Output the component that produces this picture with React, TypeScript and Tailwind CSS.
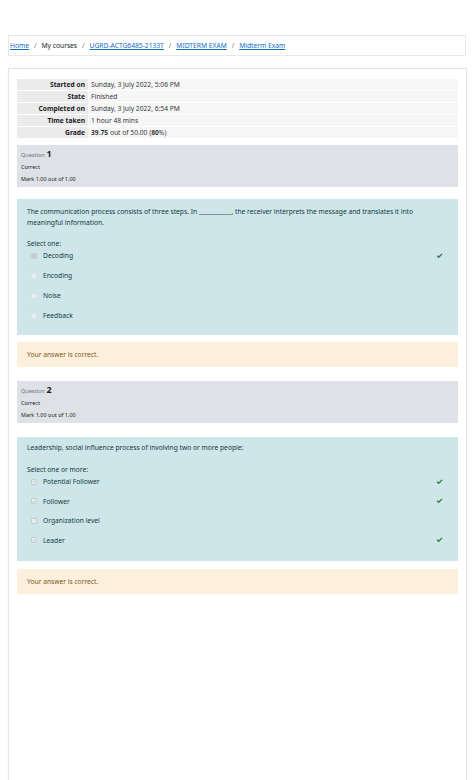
const Check = () => (
  <svg viewBox="0 0 12 10" className="w-[7px] h-[6px]" fill="#357a32">
    <path d="M1 5.2 L2.6 3.6 L4.6 5.6 L9.6 0.6 L11.2 2.2 L4.6 8.8 Z" />
  </svg>
);

const Radio = ({ checked }: { checked?: boolean }) => (
  <span
    className={`w-[6px] h-[6px] rounded-full ${
      checked ? "bg-[#c5cccd]" : "bg-[#eaf2f3] border border-[#dbe5e6]"
    }`}
  />
);

const Box = ({ checked }: { checked?: boolean }) => (
  <span className="w-[6px] h-[6px] rounded-[1px] border border-[#c8cfd1] bg-[#e6ecee] flex items-center justify-center">
    {checked && (
      <svg viewBox="0 0 10 10" className="w-[5px] h-[5px]" fill="none" stroke="#b7bfc1" strokeWidth="2">
        <path d="M1.5 5 L4 7.5 L8.5 2" />
      </svg>
    )}
  </span>
);

const rows = [
  { label: "Started on", value: <>Sunday, 3 July 2022, 5:06 PM</> },
  { label: "State", value: <>Finished</> },
  { label: "Completed on", value: <>Sunday, 3 July 2022, 6:54 PM</> },
  { label: "Time taken", value: <>1 hour 48 mins</> },
  {
    label: "Grade",
    value: (
      <>
        <b>39.75</b> out of 50.00 (<b>80</b>%)
      </>
    ),
  },
];

const Info = ({ n }: { n: number }) => (
  <div className="bg-[#dee2e6] h-[42px] px-[4px] pt-[3px] text-[#1d2125]">
    <div className="flex items-baseline gap-[2px] leading-[12px]">
      <span className="text-[5.5px] text-[#6a737b]">Question</span>
      <span className="text-[9px] font-bold">{n}</span>
    </div>
    <div className="text-[5.5px] leading-[12px]">Correct</div>
    <div className="text-[5.5px] leading-[12px]">Mark 1.00 out of 1.00</div>
  </div>
);

const Option = ({
  text,
  ok,
  mark,
  gap = "mb-[9px]",
}: {
  text: string;
  ok?: boolean;
  mark: React.ReactNode;
  gap?: string;
}) => (
  <div className={`flex items-center h-[11px] pl-[4px] pr-[5px] ${gap}`}>
    <span className="w-[12px] flex items-center">{mark}</span>
    <span className="flex-1">{text}</span>
    {ok && <Check />}
  </div>
);

const Feedback = () => (
  <div className="bg-[#fcefdc] h-[25px] flex items-center px-[10px] text-[#7d5a29]">
    Your answer is correct.
  </div>
);

const Sep = () => <span className="mx-[5px] text-[#6a737b]">/</span>;

export default function App() {
  return (
    <div
      className="w-full min-h-[780px] bg-white px-[8px] pt-[35px] text-[6.7px] leading-[11px] text-[#1d2125]"
      style={{ fontFamily: '"Noto Sans", "Open Sans", sans-serif' }}
    >
      {/* breadcrumb */}
      <div className="h-[21px] border border-[#e8e8e8] flex items-center pl-[1px] w-[458px]">
        <a className="text-[#0f6cbf] underline">Home</a>
        <Sep />
        <span>My courses</span>
        <Sep />
        <a className="text-[#0f6cbf] underline">UGRD-ACTG6485-2133T</a>
        <Sep />
        <a className="text-[#0f6cbf] underline">MIDTERM EXAM</a>
        <Sep />
        <a className="text-[#0f6cbf] underline">Midterm Exam</a>
      </div>

      {/* main card */}
      <div className="mt-[12px] border border-[#e4e4e4] border-b-0 min-h-[712px] px-[8px] pt-[10px] w-[459px] shadow-[0_0_2px_rgba(0,0,0,0.06)]">
        {/* summary table */}
        <div className="flex flex-col gap-[1px]">
          {rows.map((r) => (
            <div key={r.label} className="flex h-[11px]">
              <div className="w-[71px] bg-[#ebebeb] text-right pr-[3px] font-bold leading-[11px]">
                {r.label}
              </div>
              <div className="flex-1 pl-[3px] leading-[11px] bg-[#f6f6f6] text-[#343a40]">
                {r.value}
              </div>
            </div>
          ))}
        </div>

        {/* question 1 */}
        <div className="mt-[7px]">
          <Info n={1} />
        </div>
        <div className="mt-[12px] bg-[#cee6ea] px-[10px] pt-[7px] pb-[5px] text-[#12393e]">
          <p>
            The communication process consists of three steps. In ___________, the receiver
            interprets the message and translates it into meaningful information.
          </p>
          <p className="mt-[10px]">Select one:</p>
          <div className="mt-[1px]">
            <Option text="Decoding" ok mark={<Radio checked />} />
            <Option text="Encoding" mark={<Radio />} />
            <Option text="Noise" mark={<Radio />} />
            <Option text="Feedback" mark={<Radio />} />
          </div>
        </div>
        <div className="mt-[7px]">
          <Feedback />
        </div>

        {/* question 2 */}
        <div className="mt-[14px]">
          <Info n={2} />
        </div>
        <div className="mt-[14px] bg-[#cee6ea] px-[10px] pt-[5px] pb-[7px] text-[#12393e]">
          <p>Leadership, social influence process of involving two or more people:</p>
          <p className="mt-[11px]">Select one or more:</p>
          <div className="mt-[1px]">
            <Option text="Potential Follower" ok mark={<Box checked />} gap="mb-[8.6px]" />
            <Option text="Follower" ok mark={<Box checked />} gap="mb-[8.6px]" />
            <Option text="Organization level" mark={<Box />} gap="mb-[8.6px]" />
            <Option text="Leader" ok mark={<Box checked />} gap="mb-[8.6px]" />
          </div>
        </div>
        <div className="mt-[8px]">
          <Feedback />
        </div>
      </div>
    </div>
  );
}
